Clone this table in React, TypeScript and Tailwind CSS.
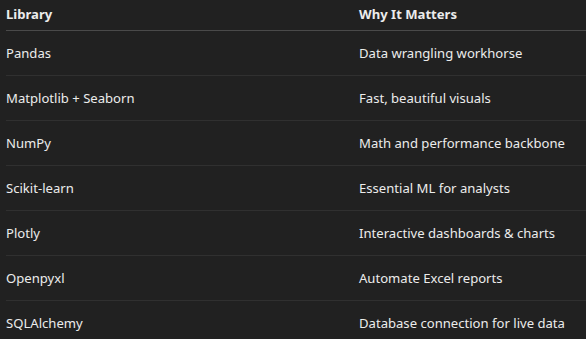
const rows = [
  ['Pandas', 'Data wrangling workhorse'],
  ['Matplotlib + Seaborn', 'Fast, beautiful visuals'],
  ['NumPy', 'Math and performance backbone'],
  ['Scikit-learn', 'Essential ML for analysts'],
  ['Plotly', 'Interactive dashboards & charts'],
  ['Openpyxl', 'Automate Excel reports'],
  ['SQLAlchemy', 'Database connection for live data'],
];

export default function App() {
  return (
    <div
      className="w-[586px] h-[339px] overflow-hidden bg-[#212121] pl-[6px] text-[13.1px] text-[#ececec]"
      style={{ fontFamily: '"Noto Sans", "Open Sans", sans-serif' }}
    >
      <div className="w-[600px]">
        <div className="flex h-[31px] items-center border-b border-[#4a4a4a] font-bold">
          <div className="w-[353px]">Library</div>
          <div>Why It Matters</div>
        </div>
        {rows.map(([lib, why]) => (
          <div key={lib} className="flex h-[45px] items-center border-b border-[#303030] pt-[2px]">
            <div className="w-[353px]">{lib}</div>
            <div>{why}</div>
          </div>
        ))}
      </div>
    </div>
  );
}
